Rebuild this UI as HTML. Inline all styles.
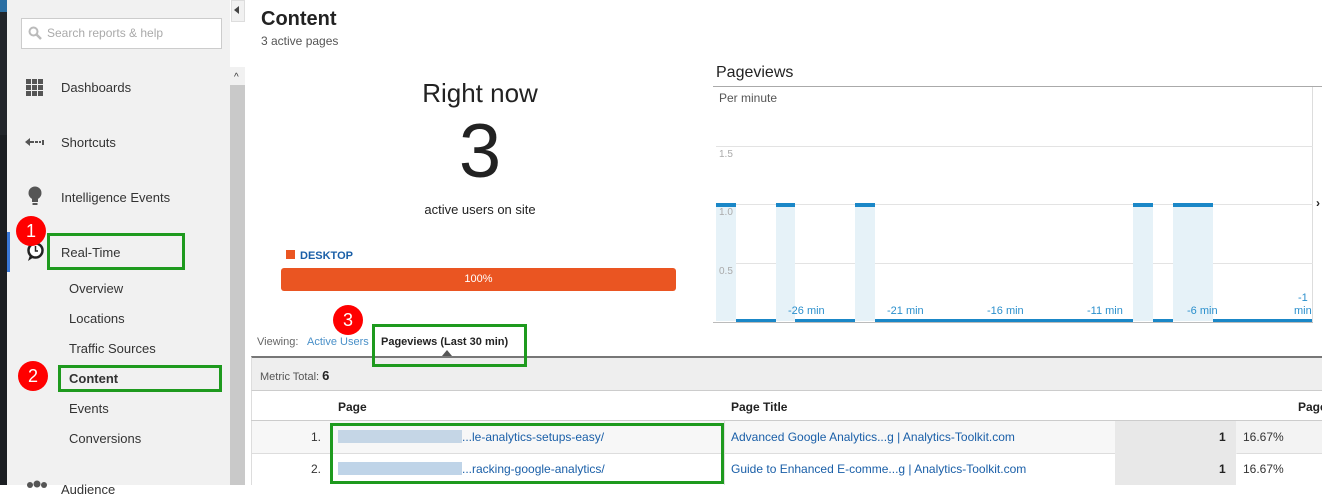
<!DOCTYPE html>
<html><head><style>
*{margin:0;padding:0;box-sizing:border-box}
body{width:1322px;height:485px;overflow:hidden;position:relative;font-family:"Liberation Sans",Arial,sans-serif;background:#fff;color:#333}
.a{position:absolute}
.nav{font-size:13px;color:#333}
.sub{font-size:13px;color:#333}
.badge{position:absolute;width:30px;height:30px;border-radius:50%;background:#f00;color:#fff;font-size:18px;text-align:center;line-height:30px}
.gbox{position:absolute;border:3px solid #1e9a1e}
.lbl{position:absolute;font-size:11px;color:#2a8fcc}
.grid{position:absolute;left:716px;width:597px;height:1px;background:#e3e3e3}
.ax{position:absolute;left:719px;font-size:10px;color:#aaa;z-index:2}
.bar{position:absolute;top:203px;height:118px;background:#e6f2f8;border-top:4px solid #1a87c7}
.bl{position:absolute;top:319px;height:3px;background:#1a87c7}
a{color:#1a5fa8;text-decoration:none}
</style></head><body>
<div class="a" style="left:0;top:0;width:7px;height:485px;background:#22262b"></div>
<div class="a" style="left:0;top:0;width:7px;height:12px;background:#2b6fa3"></div>
<div class="a" style="left:0;top:135px;width:7px;height:350px;background:#1b1e22"></div>
<div class="a" style="left:7px;top:0;width:223px;height:485px;background:#f1f1f1"></div>
<div class="a" style="left:7px;top:232px;width:3px;height:40px;background:#3a78d8"></div>
<div class="a" style="left:21px;top:18px;width:201px;height:31px;background:#fff;border:1px solid #ccc"></div>
<svg class="a" style="left:28px;top:26px" width="14" height="14" viewBox="0 0 14 14"><circle cx="5.5" cy="5.5" r="4" fill="none" stroke="#bbb" stroke-width="2"/><path d="M8.5 8.5L13 13" stroke="#bbb" stroke-width="2.5"/></svg>
<div class="a" style="left:47px;top:26px;font-size:12px;color:#aaa">Search reports &amp; help</div>
<div class="a" style="left:230px;top:0;width:15px;height:485px;background:#fff"></div>
<div class="a" style="left:231px;top:0;width:14px;height:22px;background:#f1f1f1;border:1px solid #ddd"></div>
<div class="a" style="left:234px;top:6px;width:0;height:0;border-top:4px solid transparent;border-bottom:4px solid transparent;border-right:5px solid #444"></div>
<div class="a" style="left:230px;top:67px;width:15px;height:418px;background:#f1f1f1"></div>
<div class="a" style="left:234px;top:72px;font-size:10px;color:#333">^</div>
<div class="a" style="left:230px;top:85px;width:15px;height:400px;background:#c9c9c9"></div>
<svg class="a" style="left:26px;top:79px" width="18" height="18"><g fill="#555"><rect x="0" y="0" width="5" height="5"/><rect x="6" y="0" width="5" height="5"/><rect x="12" y="0" width="5" height="5"/><rect x="0" y="6" width="5" height="5"/><rect x="6" y="6" width="5" height="5"/><rect x="12" y="6" width="5" height="5"/><rect x="0" y="12" width="5" height="5"/><rect x="6" y="12" width="5" height="5"/><rect x="12" y="12" width="5" height="5"/></g></svg>
<div class="a nav" style="left:61px;top:80px">Dashboards</div>
<svg class="a" style="left:25px;top:137px" width="22" height="10"><path d="M0 5L5 1V9Z" fill="#555"/><rect x="4" y="4" width="5" height="2" fill="#555"/><rect x="10" y="4" width="3" height="2" fill="#555"/><rect x="14" y="4" width="2" height="2" fill="#555"/><rect x="17" y="3" width="2" height="5" fill="#555"/></svg>
<div class="a nav" style="left:61px;top:135px">Shortcuts</div>
<svg class="a" style="left:28px;top:186px" width="14" height="22"><circle cx="7" cy="7" r="6.5" fill="#555"/><rect x="4" y="12" width="6" height="4" fill="#555"/><rect x="4.5" y="17" width="5" height="2" fill="#555"/></svg>
<div class="a nav" style="left:61px;top:190px">Intelligence Events</div>
<svg class="a" style="left:27px;top:242px" width="18" height="20"><circle cx="8.5" cy="8.5" r="7" fill="#fff" stroke="#222" stroke-width="2.5"/><path d="M8.5 4V9H11" stroke="#222" stroke-width="1.5" fill="none"/><path d="M3 13L1 19L7 15Z" fill="#222"/></svg>
<div class="a nav" style="left:61px;top:245px">Real-Time</div>
<div class="a sub" style="left:69px;top:281px">Overview</div>
<div class="a sub" style="left:69px;top:311px">Locations</div>
<div class="a sub" style="left:69px;top:341px">Traffic Sources</div>
<div class="a sub" style="left:69px;top:371px;font-weight:bold">Content</div>
<div class="a sub" style="left:69px;top:401px">Events</div>
<div class="a sub" style="left:69px;top:431px">Conversions</div>
<svg class="a" style="left:25px;top:480px" width="22" height="8"><circle cx="5" cy="5" r="3" fill="#555"/><circle cx="12" cy="4" r="3.5" fill="#555"/><circle cx="19" cy="5" r="3" fill="#555"/></svg>
<div class="a nav" style="left:61px;top:482px">Audience</div>
<div class="badge" style="left:16px;top:216px">1</div>
<div class="gbox" style="left:47px;top:233px;width:138px;height:37px"></div>
<div class="badge" style="left:18px;top:361px">2</div>
<div class="gbox" style="left:58px;top:365px;width:164px;height:27px"></div>

<div class="a" style="left:261px;top:8px;font-size:20px;font-weight:bold;color:#222">Content</div>
<div class="a" style="left:261px;top:34px;font-size:12px;color:#555">3 active pages</div>
<div class="a" style="left:380px;top:78px;width:200px;text-align:center;font-size:26px;color:#222">Right now</div>
<div class="a" style="left:380px;top:112px;width:200px;text-align:center;font-size:76px;line-height:80px;color:#222">3</div>
<div class="a" style="left:380px;top:202px;width:200px;text-align:center;font-size:13px;color:#222">active users on site</div>
<div class="a" style="left:286px;top:250px;width:9px;height:9px;background:#ea5522"></div>
<div class="a" style="left:300px;top:250px;font-size:11px;font-weight:bold;color:#1a5fa8">DESKTOP</div>
<div class="a" style="left:281px;top:268px;width:395px;height:23px;background:#ea5522;border-radius:3px;color:#fff;font-size:11px;text-align:center;line-height:23px">100%</div>

<div class="a" style="left:716px;top:64px;font-size:16px;color:#222">Pageviews</div>
<div class="a" style="left:713px;top:86px;width:609px;height:1px;background:#aaa"></div>
<div class="a" style="left:1312px;top:87px;width:1px;height:235px;background:#ddd"></div>
<div class="a" style="left:719px;top:91px;font-size:12px;color:#555">Per minute</div>
<div class="grid" style="top:146px"></div>
<div class="grid" style="top:204px"></div>
<div class="grid" style="top:263px"></div>
<div class="bar" style="left:716px;width:20px"></div>
<div class="bar" style="left:776px;width:19px"></div>
<div class="bar" style="left:855px;width:20px"></div>
<div class="bar" style="left:1133px;width:20px"></div>
<div class="bar" style="left:1173px;width:40px"></div>
<div class="ax" style="top:149px">1.5</div>
<div class="ax" style="top:207px">1.0</div>
<div class="ax" style="top:266px">0.5</div>
<div class="bl" style="left:736px;width:40px"></div>
<div class="bl" style="left:795px;width:60px"></div>
<div class="bl" style="left:875px;width:258px"></div>
<div class="bl" style="left:1153px;width:20px"></div>
<div class="bl" style="left:1213px;width:99px"></div>
<div class="a" style="left:713px;top:322px;width:600px;height:1px;background:#bbb"></div>
<div class="lbl" style="left:788px;top:305px">-26 min</div>
<div class="lbl" style="left:887px;top:305px">-21 min</div>
<div class="lbl" style="left:987px;top:305px">-16 min</div>
<div class="lbl" style="left:1087px;top:305px">-11 min</div>
<div class="lbl" style="left:1187px;top:305px">-6 min</div>
<div class="lbl" style="left:1298px;top:292px">-1</div>
<div class="lbl" style="left:1294px;top:305px">min</div>
<div class="a" style="left:1316px;top:196px;font-size:12px;font-weight:bold;color:#222">›</div>

<div class="a" style="left:257px;top:336px;font-size:11px;color:#666">Viewing:</div>
<div class="a" style="left:307px;top:336px;font-size:11px;color:#4a90c8">Active Users</div>
<div class="a" style="left:381px;top:336px;font-size:11px;font-weight:bold;color:#222">Pageviews (Last 30 min)</div>

<div class="a" style="left:251px;top:356px;width:1071px;height:35px;background:#eee;border-top:2px solid #777;border-bottom:1px solid #ccc;border-left:1px solid #ddd"></div>
<div class="a" style="left:442px;top:350px;width:0;height:0;border-left:5px solid transparent;border-right:5px solid transparent;border-bottom:6px solid #555"></div>
<div class="a" style="left:260px;top:368px;font-size:11px;color:#555">Metric Total: <b style="font-size:13px;color:#222">6</b></div>
<div class="a" style="left:251px;top:391px;width:1071px;height:94px;border-left:1px solid #ddd"></div>
<div class="a" style="left:251px;top:420px;width:1071px;height:1px;background:#ccc"></div>
<div class="a" style="left:338px;top:400px;font-size:12px;font-weight:bold;color:#222">Page</div>
<div class="a" style="left:731px;top:400px;font-size:12px;font-weight:bold;color:#222">Page Title</div>
<div class="a" style="left:1298px;top:400px;font-size:12px;font-weight:bold;color:#222">Page</div>
<div class="a" style="left:252px;top:421px;width:1070px;height:32px;background:#f7f7f7"></div>
<div class="a" style="left:252px;top:453px;width:1070px;height:1px;background:#ddd"></div>
<div class="a" style="left:1115px;top:421px;width:122px;height:64px;background:#e8e8e8"></div>
<div class="a" style="left:1237px;top:421px;width:1px;height:64px;background:#ddd"></div>
<div class="a" style="left:1236px;top:421px;width:86px;height:32px;background:#f3f3f3"></div>
<div class="a" style="left:1236px;top:454px;width:86px;height:31px;background:#fff"></div>
<div class="a" style="left:724px;top:421px;width:1px;height:64px;background:#ddd"></div>
<div class="a" style="left:311px;top:430px;font-size:12px;color:#333">1.</div>
<div class="a" style="left:311px;top:462px;font-size:12px;color:#333">2.</div>
<div class="a" style="left:338px;top:430px;width:124px;height:13px;background:#c5d6e6"></div>
<div class="a" style="left:338px;top:462px;width:124px;height:13px;background:#bfd4e8"></div>
<div class="a" style="left:462px;top:430px;font-size:12px"><a>...le-analytics-setups-easy/</a></div>
<div class="a" style="left:462px;top:462px;font-size:12px"><a>...racking-google-analytics/</a></div>
<div class="a" style="left:731px;top:430px;font-size:12px"><a>Advanced Google Analytics...g | Analytics-Toolkit.com</a></div>
<div class="a" style="left:731px;top:462px;font-size:12px"><a>Guide to Enhanced E-comme...g | Analytics-Toolkit.com</a></div>
<div class="a" style="left:1219px;top:430px;font-size:12px;font-weight:bold;color:#222">1</div>
<div class="a" style="left:1219px;top:462px;font-size:12px;font-weight:bold;color:#222">1</div>
<div class="a" style="left:1243px;top:430px;font-size:12px;color:#333">16.67%</div>
<div class="a" style="left:1243px;top:462px;font-size:12px;color:#333">16.67%</div>
<div class="gbox" style="left:330px;top:423px;width:394px;height:61px"></div>
<div class="badge" style="left:333px;top:305px">3</div>
<div class="gbox" style="left:372px;top:324px;width:155px;height:43px"></div>
</body></html>
